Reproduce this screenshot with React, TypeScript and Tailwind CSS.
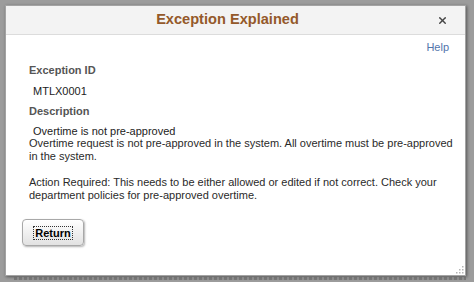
import { X } from 'lucide-react'

export default function App() {
  return (
    <div className="w-[474px] h-[282px] bg-[#9c9c9c] overflow-hidden flex flex-col font-['Liberation_Sans',Arial,sans-serif]">
      <div className="pl-[5px] pt-[5px]">
        {/* Modal */}
        <div className="w-[461px] h-[271px] bg-white border border-[#a3a3a3] shadow-[1px_1px_3px_rgba(0,0,0,0.45)] flex flex-col relative">
          {/* Header */}
          <div className="h-[29px] bg-[#f3f3f3] border-b border-[#dcdcdc] flex items-center justify-between shrink-0">
            <div className="w-[40px]" />
            <h1 className="flex-1 text-center text-[14.6px] font-bold text-[#94592a] pr-[16px] -mt-[1px]">
              Exception Explained
            </h1>
            <div className="w-[40px] flex justify-center pr-[6px] text-[#444]">
              <X size={11} strokeWidth={3.2} />
            </div>
          </div>

          {/* Body */}
          <div className="flex flex-col pl-[23px] pr-[10px] text-[11px]">
            <div className="flex justify-end mt-[6px] pr-[6px] leading-[13px]">
              <span className="text-[#5274ab]">Help</span>
            </div>

            <div className="mt-[10px] leading-[13px] font-bold text-[#555]">Exception ID</div>
            <div className="mt-[8px] pl-[4px] leading-[13px] text-[#222]">MTLX0001</div>

            <div className="mt-[7px] leading-[13px] font-bold text-[#555]">Description</div>
            <div className="mt-[7px] pl-[4px] leading-[12px] text-[#222]">Overtime is not pre-approved</div>
            <p className="leading-[13px] text-[#2a2a2a]">
              Overtime request is not pre-approved in the system. All overtime must be pre&#8209;approved in the system.
            </p>
            <p className="mt-[13px] leading-[13px] text-[#2a2a2a]">
              Action Required: This needs to be either allowed or edited if not correct. Check your department policies for pre-approved overtime.
            </p>

            <div className="mt-[17px] -ml-[7px]">
              <button className="w-[62px] h-[27px] rounded-[4px] border border-[#a8a8a8] bg-gradient-to-b from-white to-[#e2e2e2] shadow-[1px_1px_2px_rgba(0,0,0,0.3)] flex items-center justify-center">
                <span className="text-[11px] font-bold text-black leading-[12px] px-[1px] outline outline-1 outline-dotted outline-[#333]">
                  Return
                </span>
              </button>
            </div>
          </div>

          {/* resize grip */}
          <svg className="absolute right-[1px] bottom-[1px]" width="8" height="8" viewBox="0 0 8 8">
            <rect x="6" y="0" width="1.5" height="1.5" fill="#b5b5b5" />
            <rect x="3" y="3" width="1.5" height="1.5" fill="#b5b5b5" />
            <rect x="6" y="3" width="1.5" height="1.5" fill="#b5b5b5" />
            <rect x="0" y="6" width="1.5" height="1.5" fill="#b5b5b5" />
            <rect x="3" y="6" width="1.5" height="1.5" fill="#b5b5b5" />
            <rect x="6" y="6" width="1.5" height="1.5" fill="#b5b5b5" />
          </svg>
        </div>
      </div>

      {/* blurred page content peeking under the modal */}
      <div className="mt-[1px] ml-[14px] mr-[8px] h-[3px] bg-[repeating-linear-gradient(90deg,#6e6e6e_0px,#6e6e6e_3px,#8a8a8a_3px,#8a8a8a_5px)] opacity-80" />
    </div>
  )
}
